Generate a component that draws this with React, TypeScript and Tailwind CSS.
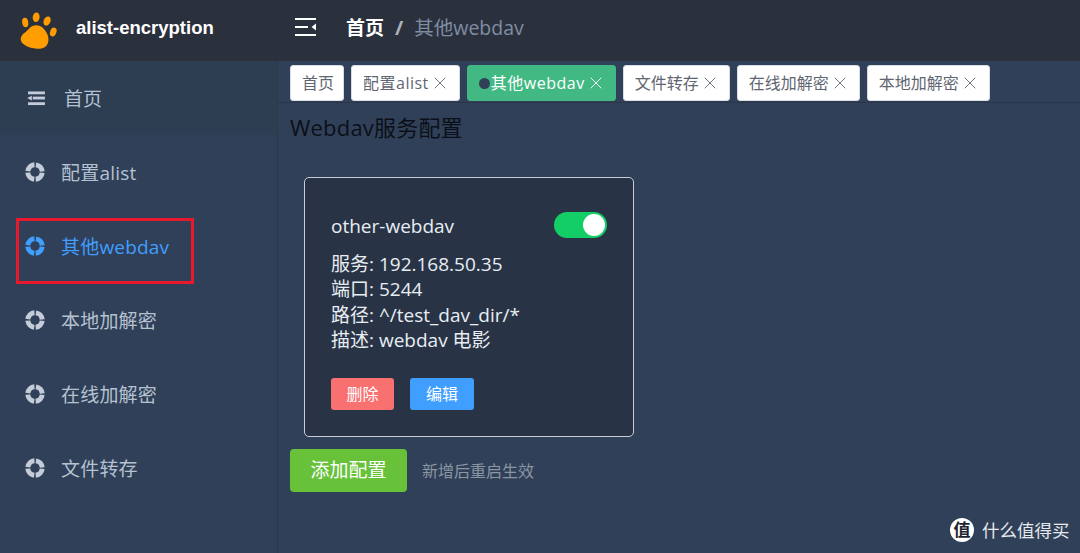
import React from "react";
import { X } from "lucide-react";

const font = "font-['Open_Sans','Noto_Sans_CJK_SC',sans-serif]";

function PawLogo() {
  return (
    <svg viewBox="0 0 40 40" className="w-[38px] h-[40px]">
      <g fill="#ff9c00">
        <ellipse cx="17" cy="5.5" rx="3.6" ry="5" transform="rotate(8 17 5.5)" />
        <ellipse cx="28.5" cy="9.5" rx="3.6" ry="5" transform="rotate(22 28.5 9.5)" />
        <ellipse cx="5.5" cy="11" rx="3.2" ry="5" transform="rotate(-8 5.5 11)" />
        <ellipse cx="35" cy="21" rx="3.3" ry="4.8" transform="rotate(20 35 21)" />
        <path d="M17 14c6 0 10 5 12 10 2 5 1 11-3 13-4 2-8 2-13 1-5-1-11-4-12-8-1-4 2-7 5-9 3-2 5-7 11-7z" />
      </g>
    </svg>
  );
}

function RingIcon({ color }: { color: string }) {
  return (
    <svg viewBox="0 0 20 20" className="w-5 h-5 shrink-0" fill="none" stroke={color}>
      <circle cx="10" cy="10" r="7.2" strokeWidth="5" strokeDasharray="9.8 1.5" strokeDashoffset="-0.75" />
    </svg>
  );
}

function HomeIcon() {
  return (
    <svg viewBox="0 0 20 16" className="w-[19px] h-[15px] shrink-0" fill="#c3ccd8">
      <rect x="1" y="0.5" width="18" height="3" />
      <rect x="6" y="6" width="13" height="3" />
      <path d="M0 7.5 5 5v5z" />
      <rect x="1" y="12" width="18" height="3" />
    </svg>
  );
}

function FoldIcon() {
  return (
    <svg viewBox="0 0 22 20" className="w-[22px] h-[20px] -mt-[2px]" fill="#fff">
      <rect x="0" y="1" width="21" height="2" />
      <rect x="0" y="9" width="13" height="2" />
      <rect x="0" y="17" width="21" height="2" />
      <path d="M21 6.5v7l-4.5-3.5z" />
    </svg>
  );
}

function NavItem({ label, active }: { label: React.ReactNode; active?: boolean }) {
  return (
    <div className={`h-[74px] flex items-center pl-[25px] gap-[16px] text-[19px] ${active ? "text-[#409eff]" : "text-[#b5c2d1]"}`}>
      <RingIcon color={active ? "#409eff" : "#c3ccd8"} />
      <span className="mt-[2px] tracking-[0.2px]">{label}</span>
    </div>
  );
}

function Tab({
  label,
  closable = true,
  active,
  latin,
  className = "",
}: {
  label: string;
  closable?: boolean;
  active?: boolean;
  latin?: boolean;
  className?: string;
}) {
  return (
    <div
      className={`h-[36px] flex items-center pl-[11px] pr-[9px] gap-[1px] rounded-[3px] border text-[16px] whitespace-nowrap ${
        active ? "bg-[#42b983] border-[#42b983] text-white" : "bg-white text-[#5f6672] border-[#d8dce5]"
      } ${className}`}
    >
      {active && <span className="w-[11px] h-[11px] rounded-full bg-[#304058]" />}
      <span className={latin ? "tracking-[0.5px]" : ""}>{label}</span>
      {closable && <X size={20} strokeWidth={1.1} className={active ? "text-white" : "text-[#666d78]"} />}
    </div>
  );
}

export default function App() {
  return (
    <div className={`relative w-[1080px] h-[553px] overflow-hidden flex flex-col bg-[#304058] ${font}`}>
      {/* Header */}
      <header className="h-[61px] shrink-0 bg-[#2b303d] flex items-center">
        <div className="w-[277px] flex items-center pl-[20px] gap-[18px]">
          <PawLogo />
          <span className="text-white font-bold text-[18.5px] font-['Liberation_Sans',sans-serif] -mt-[5px]">alist-encryption</span>
        </div>
        <div className="flex items-center pl-[18px] -mt-[5px]">
          <FoldIcon />
          <span className="ml-[29px] text-white font-bold text-[19px]">首页</span>
          <span className="mx-[11px] text-[#a9b1bd] font-bold text-[20px]">/</span>
          <span className="text-[#7f8da3] text-[19.5px]">其他webdav</span>
        </div>
      </header>

      <div className="flex-1 flex min-h-0">
        {/* Sidebar */}
        <aside className="w-[278px] shrink-0 bg-[#304058] border-r border-[#2a384c]">
          <div className="h-[74px] bg-[#2d3d52] flex items-center pl-[27px] gap-[18px] text-[19px] text-[#b5c2d1]">
            <HomeIcon />
            <span className="mt-[2px]">首页</span>
          </div>
          <NavItem label="配置alist" />
          <NavItem label="其他webdav" active />
          <NavItem label="本地加解密" />
          <NavItem label="在线加解密" />
          <NavItem label="文件转存" />
        </aside>

        {/* Main */}
        <main className="flex-1 min-w-0">
          <div className="h-[42px] flex items-start pt-[4px] pl-[12px] gap-[7px] border-b border-[#2a3547]">
            <Tab label="首页" closable={false} />
            <Tab label="配置alist" latin />
            <Tab label="其他webdav" active latin />
            <Tab label="文件转存" className="w-[107px]" />
            <Tab label="在线加解密" />
            <Tab label="本地加解密" />
          </div>

          <div className="pl-[12px]">
            <h2 className="mt-[10px] text-[22px] leading-[28px] tracking-[0.2px] text-[#0b1018]">Webdav服务配置</h2>

            <div className="mt-[36px] ml-[14px] w-[330px] h-[260px] rounded-[5px] border border-[#c9ced6] bg-[#283446] pt-[33px] px-[26px] text-[#e8edf3]">
              <div className="flex items-center justify-between h-[30px]">
                <span className="text-[19px]">other-webdav</span>
                <div className="mb-[2px] w-[53px] h-[26px] rounded-full bg-[#13ce66] flex items-center justify-end pr-[2px]">
                  <span className="w-[22px] h-[22px] rounded-full bg-white" />
                </div>
              </div>
              <div className="mt-[11px] text-[19px] leading-[25.3px]">
                <div>服务: 192.168.50.35</div>
                <div>端口: 5244</div>
                <div>路径: ^/test_dav_dir/*</div>
                <div>描述: webdav 电影</div>
              </div>
              <div className="mt-[25px] flex gap-[16px]">
                <button className="w-[63px] h-[32px] rounded-[3px] bg-[#f97070] text-white text-[16px]">删除</button>
                <button className="w-[64px] h-[32px] rounded-[3px] bg-[#409eff] text-white text-[16px]">编辑</button>
              </div>
            </div>

            <div className="mt-[12px] flex items-center gap-[15px]">
              <button className="w-[117px] h-[43px] rounded-[4px] bg-[#67c23a] text-white text-[19px]">添加配置</button>
              <span className="text-[16px] text-[#8b95a3]">新增后重启生效</span>
            </div>
          </div>
        </main>
      </div>

      {/* Red annotation box */}
      <div className="absolute left-[16px] top-[218px] w-[178px] h-[66px] border-[3px] border-[#e8192c]" />

      {/* Watermark */}
      <div className="absolute left-[950px] top-[518px] flex items-center gap-[8px]">
        <span className="w-[24px] h-[24px] rounded-full bg-white flex items-center justify-center text-[#1c2430] text-[17px] font-bold">值</span>
        <span className="text-[#e6e9ee] text-[17.5px] leading-[24px]">什么值得买</span>
      </div>
    </div>
  );
}
